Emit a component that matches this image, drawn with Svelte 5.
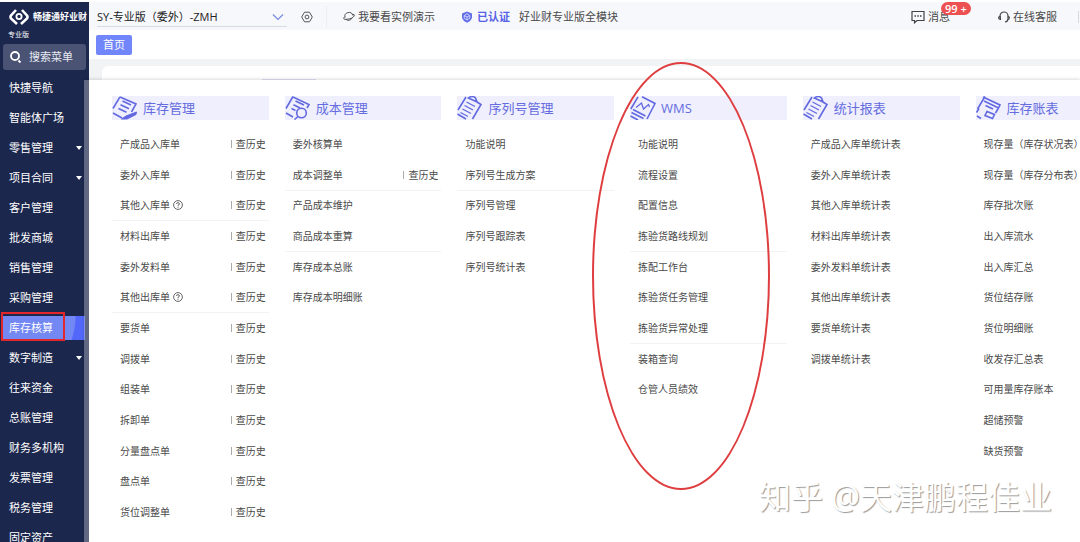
<script lang="ts">
	type Item = {
		name: string;
		history?: boolean;
		help?: boolean;
		line?: boolean;
	};

	const modules = [
		{ name: '快捷导航' },
		{ name: '智能体广场' },
		{ name: '零售管理', more: true },
		{ name: '项目合同', more: true },
		{ name: '客户管理' },
		{ name: '批发商城' },
		{ name: '销售管理' },
		{ name: '采购管理' },
		{ name: '库存核算' },
		{ name: '数字制造', more: true },
		{ name: '往来资金' },
		{ name: '总账管理' },
		{ name: '财务多机构' },
		{ name: '发票管理' },
		{ name: '税务管理' },
		{ name: '固定资产' }
	];

	const plain = (names: string[]): Item[] => names.map((name) => ({ name }));

	const groups: { title: string; icon: string; items: Item[] }[] = [
		{
			title: '库存管理',
			icon: 'pen',
			items: [
				{ name: '产成品入库单', history: true },
				{ name: '委外入库单', history: true },
				{ name: '其他入库单', history: true, help: true, line: true },
				{ name: '材料出库单', history: true },
				{ name: '委外发料单', history: true },
				{ name: '其他出库单', history: true, help: true, line: true },
				{ name: '要货单', history: true },
				{ name: '调拨单', history: true },
				{ name: '组装单', history: true },
				{ name: '拆卸单', history: true },
				{ name: '分量盘点单', history: true },
				{ name: '盘点单', history: true },
				{ name: '货位调整单', history: true }
			]
		},
		{
			title: '成本管理',
			icon: 'search',
			items: [
				{ name: '委外核算单' },
				{ name: '成本调整单', history: true, line: true },
				{ name: '产品成本维护' },
				{ name: '商品成本重算', line: true },
				{ name: '库存成本总账' },
				{ name: '库存成本明细账' }
			]
		},
		{
			title: '序列号管理',
			icon: 'clip',
			items: [
				{ name: '功能说明' },
				{ name: '序列号生成方案', line: true },
				{ name: '序列号管理' },
				{ name: '序列号跟踪表' },
				{ name: '序列号统计表' }
			]
		},
		{
			title: 'WMS',
			icon: 'chart',
			items: [
				{ name: '功能说明' },
				{ name: '流程设置' },
				{ name: '配置信息' },
				{ name: '拣验货路线规划', line: true },
				{ name: '拣配工作台' },
				{ name: '拣验货任务管理' },
				{ name: '拣验货异常处理', line: true },
				{ name: '装箱查询' },
				{ name: '仓管人员绩效' }
			]
		},
		{
			title: '统计报表',
			icon: 'clip',
			items: plain(['产成品入库单统计表', '委外入库单统计表', '其他入库单统计表', '材料出库单统计表', '委外发料单统计表', '其他出库单统计表', '要货单统计表', '调拨单统计表'])
		},
		{
			title: '库存账表',
			icon: 'book',
			items: plain(['现存量（库存状况表）', '现存量（库存分布表）', '库存批次账', '出入库流水', '出入库汇总', '货位结存账', '货位明细账', '收发存汇总表', '可用量库存账本', '超储预警', '缺货预警'])
		}
	];

	let active = $state('库存核算');
	let keyword = $state('');
</script>

<div class="app">
	<aside class="sidebar">
		<div class="brand">
			<svg width="20" height="18" viewBox="0 0 20 18" fill="none" stroke="#fff">
				<path d="M7 2 L2 7.500 Q1 9 2 10.500 L8 16" stroke-width="2.600" />
				<path d="M13 2 L18 7.500 Q19 9 18 10.500 L12 16" stroke-width="2.600" />
				<circle cx="10" cy="8.500" r="2.600" stroke-width="1.800" />
			</svg>
			<b>畅捷通好业财</b>
		</div>
		<div class="edition">专业版</div>
		<label class="search">
			<svg width="14" height="14" viewBox="0 0 14 14" fill="none" stroke="#fff" stroke-width="1.800">
				<circle cx="6" cy="6" r="4" />
				<path d="M9.500 10.500 L11.500 12.500" />
			</svg>
			<input type="text" placeholder="搜索菜单" aria-label="搜索菜单" bind:value={keyword} />
		</label>
		<nav class="modules">
			{#each modules as m}
				<button class="module" class:active={m.name === active} onclick={() => (active = m.name)}>
					<span>{m.name}</span>
					{#if m.more}
						<i class="caret"></i>
					{/if}
				</button>
			{/each}
		</nav>
		<div class="frame"></div>
	</aside>

	<main class="main">
		<header class="topbar">
			<div class="account">
				<select aria-label="账套">
					<option>SY-专业版（委外）-ZMH</option>
				</select>
				<svg width="12" height="8" viewBox="0 0 12 8" fill="none" stroke="#7a8be0" stroke-width="1.200">
					<path d="M1 1.500 L6 6.500 L11 1.500" />
				</svg>
			</div>
			<button class="setting" aria-label="设置">
				<svg width="12" height="12" viewBox="0 0 12 12" fill="none" stroke="#555">
					<path d="M3.500 1.200 H8.500 L11.300 6 L8.500 10.800 H3.500 L0.700 6 Z" />
					<circle cx="6" cy="6" r="1.900" />
				</svg>
			</button>
			<a class="demo" href="#demo">
				<svg width="12" height="12" viewBox="0 0 12 12" fill="none" stroke="#555">
					<path d="M2 6.500 A4 4 0 0 1 9.800 4.500 M2.800 8.300 Q6 11 9.300 7" />
					<path d="M9.200 3.200 Q12 3.200 11.200 5 Q9.500 7.800 3.500 8.300 Q0 8.600 0.800 6.800 L1.800 5.800" />
				</svg>
				我要看实例演示
			</a>
			<span class="verified">
				<svg width="12" height="12" viewBox="0 0 12 12">
					<path d="M6 0.500 L11 2.500 V7 Q10 10 6 11.700 Q2 10 1 7 V2.500 Z" fill="#626de8" />
					<path d="M6 2.700 L8.800 4.600 V7.200 L6 9 L3.200 7.200 V4.600 Z M3.200 4.600 L6 6 L8.800 4.600 M6 6 V9" fill="none" stroke="#dfe3ff" stroke-width="0.800" />
				</svg>
				<b>已认证</b>
			</span>
			<span class="package">好业财专业版全模块</span>
			<button class="message">
				<svg width="14" height="14" viewBox="0 0 14 14" fill="none" stroke="#444" stroke-width="1.200">
					<path d="M1 1.500 H13 V10.500 H6 L3.500 12.800 V10.500 H1 Z" />
					<path d="M3.500 6 H5 M6.300 6 H7.800 M9 6 H10.500" stroke-width="1.600" />
				</svg>
				消息
				<span class="badge">99 +</span>
			</button>
			<button class="service">
				<svg width="12" height="12" viewBox="0 0 12 12" fill="none" stroke="#444" stroke-width="1.200">
					<path d="M2 6 V5 A4 4 0 0 1 10 5 V8 Q10 10.500 7 11" />
					<path d="M2.200 5.500 Q0.500 5.700 0.700 7 Q0.800 8.400 2.500 8.500 Z M9.900 5.500 Q11.500 5.700 11.300 7 Q11.200 8.400 9.700 8.500" />
				</svg>
				在线客服
			</button>
			<i class="divider"></i>
		</header>
		<div class="tabs">
			<button class="tab">首页</button>
		</div>
		<div class="desk">
			<div class="card"><i></i></div>
		</div>
	</main>

	<section class="mega">
		<div class="groups">
			{#each groups as group}
				<div class="group">
					<h2>
						<svg width="26" height="24" viewBox="0 0 26 24" fill="none" stroke="#6269e0" stroke-width="1.600">
							{#if group.icon === 'pen'}
								<path d="M8 0.800 L1 12.500 M8 1 L24 8 L19.500 16 M1 17 L10 22" />
								<path d="M10.500 5 L19 9 M8.500 8.800 L17 12.800 M6.500 12.500 L14.500 16.300" />
								<path d="M24.500 16 L14 20 L9.500 23 L15 23 L24 18.500 Z" fill="#6269e0" stroke-width="1" />
							{:else if group.icon === 'search'}
								<path d="M8 0.500 L1 12.500 M8 1 L24 8.500 L22 12 M1 17 L8 21" />
								<path d="M10.500 5 L19 9 M8.500 8.800 L15 12 M6.500 12.500 L10.500 14.500" />
								<circle cx="16.500" cy="17" r="4.800" />
								<path d="M13 20.500 L9.500 23.500" />
							{:else if group.icon === 'clip'}
								<path d="M9 1 L1 14 M20 6 L24 8.500 L15.500 23 M0.500 18 L9 23" />
								<path d="M11.500 2 Q15.500 -1 18.500 2 L20 6 Z" />
								<path d="M9.500 6 L18 10.500 M7.500 9.500 L16 14 M5.500 13 L14 17.500 M3.500 16.500 L11 20.500" stroke-width="1.300" />
							{:else if group.icon === 'chart'}
								<path d="M8 0.800 L0.800 13 M12 0.800 L25 7.500 L17 23" />
								<path d="M6 11.500 L11.500 7 L13.500 13 L18.500 8.500 L19.500 11" stroke-width="1.300" />
								<path d="M3 13.500 L15.500 20 M1.500 16.500 L13.500 22.500 M0.500 20 L8 24" />
							{:else}
								<path d="M9 0.500 L1.500 13 M7 1 L24 9 L22.500 12 L8 5 M22.500 12 L19.500 17" />
								<path d="M9.500 9.500 L17 13 M3 12.500 L0.500 16.500 M1 20 L5 22.500" />
								<path d="M11 15.500 L18.500 18.500 L16.500 22.500 L9 19.500 Z" />
							{/if}
						</svg>
						{group.title}
					</h2>
					<ul>
						{#each group.items as item}
							<li class:line={item.line}>
								<a href="#{item.name}">{item.name}</a>
								{#if item.help}
									<svg class="help" width="10" height="10" viewBox="0 0 10 10" fill="none" stroke="#555">
										<circle cx="5" cy="5" r="4.400" stroke-width="0.900" />
										<path d="M3.500 4 Q3.600 2.600 5 2.600 Q6.500 2.700 6.400 4 Q6.200 4.900 5 5.300 V6.200 M5 6.900 V7.800" stroke-width="0.900" />
									</svg>
								{/if}
								{#if item.history}
									<a class="history" href="#history">查历史</a>
								{/if}
							</li>
						{/each}
					</ul>
				</div>
			{/each}
		</div>
	</section>

	<div class="ellipse"></div>
	<div class="watermark">知乎 @天津鹏程佳业</div>
</div>

<style>
	:global(body) {
		margin: 0;
		overflow: hidden;
	}

	.app {
		position: relative;
		display: flex;
		height: 100vh;
		overflow: hidden;
		background: #fff;
		color: #4a4a4a;
		font-family: 'Open Sans', 'Noto Sans CJK SC', sans-serif;
		font-size: 11px;
		line-height: 16px;
	}

	a {
		color: inherit;
		text-decoration: none;
	}

	button {
		border: 0;
		padding: 0;
		background: none;
		color: inherit;
		font: inherit;
		cursor: pointer;
	}

	.sidebar {
		position: relative;
		box-sizing: border-box;
		flex: 0 0 89px;
		margin-top: 2px;
		background: #1c274e;
		color: #fff;
	}

	.brand {
		display: flex;
		align-items: center;
		gap: 4px;
		height: 29px;
		padding-left: 9px;
		font-size: 9px;
		white-space: nowrap;
	}

	.brand svg {
		flex: none;
	}

	.edition {
		height: 13px;
		padding-left: 8px;
		font-size: 7px;
		line-height: 8px;
	}

	.search {
		display: flex;
		align-items: center;
		gap: 6px;
		height: 26px;
		margin: 0 3px;
		padding-left: 6px;
		border-radius: 3px;
		background: #4a5374;
	}

	.search svg {
		flex: none;
	}

	.search input {
		width: 100%;
		min-width: 0;
		padding: 0;
		border: 0;
		outline: 0;
		background: none;
		color: #fff;
		font: inherit;
	}

	.search input::placeholder {
		color: #e8eaf2;
	}

	.modules {
		display: flex;
		flex-direction: column;
		margin-top: 3px;
		padding-right: 4px;
	}

	.module {
		display: flex;
		align-items: center;
		justify-content: space-between;
		height: 24px;
		margin: 3px 0;
		padding: 0 3px 0 9px;
		text-align: left;
		white-space: nowrap;
	}

	.module.active {
		margin-left: 3px;
		padding-left: 6px;
		background: radial-gradient(circle at 0 0, #7388f2 0 72px, #5368fa 73px);
	}

	.caret {
		border: 3px solid transparent;
		border-top: 4px solid #fff;
		border-bottom: 0;
	}

	/* marker round the current module */
	.frame {
		position: absolute;
		top: 310px;
		left: 1px;
		box-sizing: border-box;
		width: 64px;
		height: 29px;
		border: 2px solid #e3262c;
	}

	.main {
		flex: 1;
		min-width: 0;
		margin-top: 2px;
	}

	.topbar {
		display: flex;
		align-items: center;
		box-sizing: border-box;
		height: 28px;
		padding: 2px 1px 0 8px;
		background: #f7f8fc;
		white-space: nowrap;
	}

	.topbar a,
	.topbar button,
	.verified {
		display: flex;
		align-items: center;
		gap: 3px;
	}

	.account {
		display: flex;
		align-items: center;
		width: 190px;
		height: 18px;
		border-bottom: 1px solid #d8dae2;
	}

	.account select {
		flex: 1;
		min-width: 0;
		border: 0;
		padding: 0;
		appearance: none;
		background: none;
		color: #222;
		font: inherit;
	}

	.account svg {
		margin-right: 3px;
	}

	.topbar .setting {
		margin-left: 14px;
		padding-right: 13px;
		border-right: 1px solid #eceef4;
		height: 22px;
	}

	.demo {
		margin-left: 16px;
	}

	.verified {
		margin-left: 26px;
		color: #5661e6;
	}

	.topbar .verified {
		gap: 4px;
	}

	.package {
		margin-left: 9px;
	}

	.message {
		position: relative;
		margin-left: auto;
	}

	.badge {
		position: absolute;
		top: -7px;
		left: 30px;
		padding: 0 4px;
		border-radius: 7px;
		background: #ec5050;
		color: #fff;
		font-size: 11px;
		font-weight: 600;
		line-height: 13px;
	}

	.service {
		margin-left: 48px;
	}

	.divider {
		height: 12px;
		margin-left: 21px;
		border-left: 1px solid #d8dae2;
	}

	.tabs {
		height: 24px;
		padding: 5px 7px 0;
	}

	.tab {
		height: 20px;
		padding: 0 7px;
		border-radius: 2px;
		background: #7186fb;
		color: #fff;
	}

	.desk {
		padding: 7px 0 0 13px;
		background: #f1f3f4;
	}

	.card {
		height: 24px;
		padding: 13px 0 0 160px;
		border-radius: 6px 0 0 0;
		background: #fff;
	}

	.card i {
		display: block;
		width: 54px;
		height: 8px;
		background: #dfe1f5;
	}

	/* open menu, lies over the desk and the sidebar edge */
	.mega {
		position: absolute;
		top: 80px;
		right: 0;
		bottom: 0;
		left: 84px;
		overflow: hidden;
		border-left: 5px solid rgba(255, 255, 255, 0.3);
		background: #fff;
		background-clip: padding-box;
		box-shadow: 0 -1px 3px rgba(0, 0, 0, 0.14);
	}

	.groups {
		display: grid;
		grid-template-columns: repeat(5, 3fr) 2fr;
		gap: 16px;
		margin: 16px 0 0 23px;
	}

	.group {
		min-width: 0;
	}

	h2 {
		display: flex;
		align-items: center;
		gap: 5px;
		height: 24px;
		margin: 0 0 8px;
		background: #efeffe;
		color: #656cdf;
		font-size: 13px;
		font-weight: 400;
	}

	ul {
		display: grid;
		grid-auto-rows: 31px 31px 30px;
		margin: 0;
		padding: 0;
		list-style: none;
		font-size: 10px;
	}

	li {
		display: flex;
		align-items: center;
		padding-left: 8px;
	}

	.line {
		box-shadow: 0 1px #f3f3f5;
	}

	.help {
		margin-left: 3px;
	}

	.history {
		display: flex;
		align-items: center;
		gap: 4px;
		margin: 0 3px 0 auto;
	}

	.history::before {
		content: '';
		height: 8px;
		border-left: 1px solid #aaa;
	}

	.ellipse {
		position: absolute;
		top: 62px;
		left: 592px;
		box-sizing: border-box;
		width: 178px;
		height: 428px;
		border: 2px solid #df3e40;
		border-radius: 50%;
		pointer-events: none;
	}

	.watermark {
		position: absolute;
		right: 28px;
		bottom: 23px;
		color: #fff;
		font-size: 32px;
		line-height: 44px;
		text-shadow: 1px 1px 1px #999;
		white-space: nowrap;
		pointer-events: none;
	}
</style>
